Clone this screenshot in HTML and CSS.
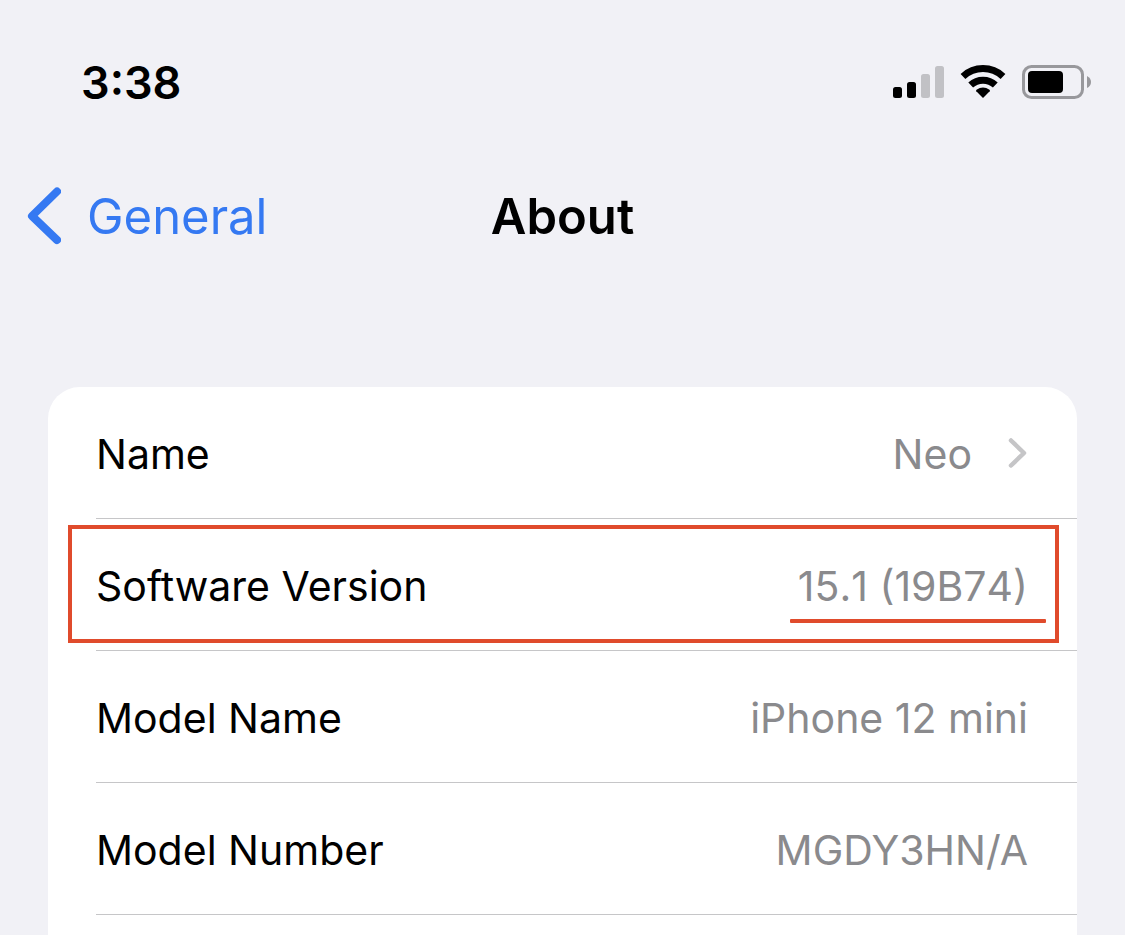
FILE: index.html
```html
<!DOCTYPE html>
<html lang="en">
<head>
<meta charset="utf-8">
<meta name="viewport" content="width=device-width, initial-scale=1">
<title>About</title>
<link rel="stylesheet" href="styles.css">
</head>
<body>
<div class="status">
  <span class="clock">3:38</span>
  <div class="indicators">
    <svg class="signal" width="51" height="34" viewBox="0 0 51 34" aria-hidden="true">
      <rect x="0" y="22" width="9" height="11" rx="2.500"/>
      <rect x="14" y="17" width="9" height="16" rx="2.500"/>
      <rect class="dim" x="28" y="9" width="9" height="24" rx="2.500"/>
      <rect class="dim" x="42" y="1" width="9" height="32" rx="2.500"/>
    </svg>
    <svg class="wifi" width="46" height="34" viewBox="0 0 46 34" aria-hidden="true">
      <path class="wave" d="M3 11.500A29.300 29.300 0 0 1 43 11.500"/>
      <path class="wave" d="M10.700 20A18 18 0 0 1 35.300 20"/>
      <path d="M23 33L16.300 26.200Q15.700 25.400 16.500 24.800Q23 20.200 29.500 24.800Q30.300 25.400 29.700 26.200Z"/>
    </svg>
    <svg class="battery" width="70" height="34" viewBox="0 0 70 34" aria-hidden="true">
      <rect class="case" x="1.500" y="1.500" width="59" height="31" rx="8"/>
      <rect x="6" y="6" width="35" height="22" rx="4"/>
      <path class="cap" d="M65 11Q69 13 69 17Q69 21 65 23Z"/>
    </svg>
  </div>
</div>
<header class="nav">
  <a class="back" href="#general">
    <svg width="34" height="58" viewBox="0 0 34 58" aria-hidden="true"><path d="M30 4.500L5 29L30 53"/></svg>
    <span>General</span>
  </a>
  <h1 class="title">About</h1>
</header>
<main class="list">
  <a class="row" href="#name">
    <span>Name</span>
    <span class="value">Neo</span>
    <svg class="chevron" width="20" height="32" viewBox="0 0 20 32" aria-hidden="true"><path d="M3 2.500L16 15L3 27.500"/></svg>
  </a>
  <div class="row marked"><span>Software Version</span><span class="value underlined">15.1 (19B74)</span></div>
  <div class="row"><span>Model Name</span><span class="value">iPhone 12 mini</span></div>
  <div class="row"><span>Model Number</span><span class="value">MGDY3HN/A</span></div>
</main>
</body>
</html>
```
FILE: styles.css
```css
* { box-sizing: border-box; }
body {
  display: flex;
  flex-direction: column;
  min-height: 100vh;
  margin: 0;
  background: #f1f1f6;
  color: #000;
  font-family: Inter, "Liberation Sans", sans-serif;
  font-size: 41px;
}
.status {
  display: flex;
  align-items: center;
  justify-content: space-between;
  height: 164px;
  padding: 0 33px 0 81px;
}
.clock { font-size: 45px; font-weight: 600; }
.indicators { display: flex; align-items: center; gap: 16px; }
.indicators svg { display: block; }
.signal, .chevron { overflow: visible; }
.dim { fill: #c1c1c5; }
.wave { fill: none; stroke: #000; stroke-width: 7; }
.case { fill: none; stroke: #98989c; stroke-width: 3; }
.cap { fill: #98989c; }
.nav {
  display: grid;
  grid-template-columns: 1fr auto 1fr;
  align-items: center;
  height: 104px;
  padding: 0 27px;
}
.back {
  display: flex;
  align-items: center;
  gap: 26px;
  color: #3579f2;
  font-size: 49px;
  text-decoration: none;
}
.back path { fill: none; stroke: #3579f2; stroke-width: 8; stroke-linecap: round; stroke-linejoin: round; }
.title { margin: 0; font-size: 49px; font-weight: 600; }
.list {
  flex: 1;
  margin: 119px 48px 0;
  padding-left: 48px;
  border-radius: 32px 32px 0 0;
  background: #fff;
}
.row {
  position: relative;
  display: flex;
  align-items: center;
  height: 132px;
  padding: 2px 49px 0 0;
  border-bottom: 1px solid #c6c6c8;
  color: #000;
  text-decoration: none;
}
.value { margin-left: auto; color: #8a8a8d; }
.chevron { margin-left: 36px; }
.chevron path { fill: none; stroke: #c5c5c7; stroke-width: 4.500; stroke-linecap: round; stroke-linejoin: round; }
.marked::before {
  content: "";
  position: absolute;
  inset: 6px 18px 7px -28px;
  border: 4px solid #e04b2c;
}
.underlined { position: relative; font-kerning: none; }
.underlined::after {
  content: "";
  position: absolute;
  left: -8px;
  right: -18px;
  bottom: -12px;
  height: 4px;
  border-radius: 1px;
  background: #e04b2c;
}
```
